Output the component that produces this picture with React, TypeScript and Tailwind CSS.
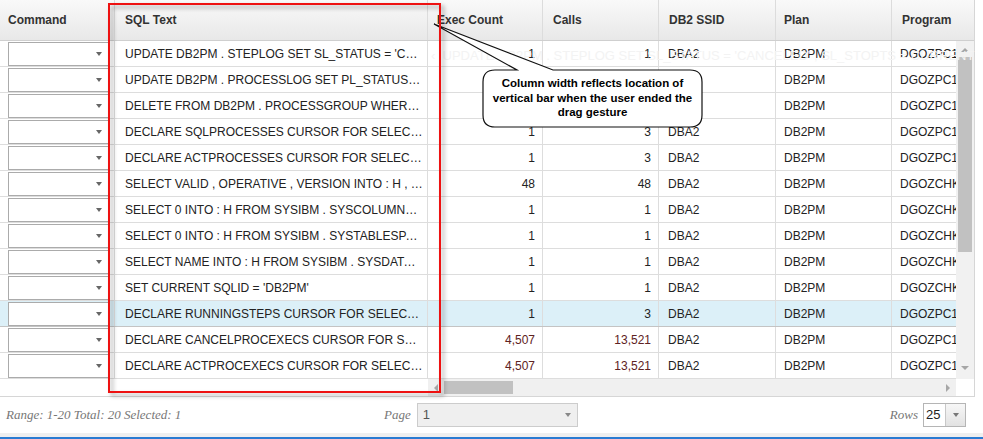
import React from "react";

type Row = {
  sql: string;
  exec: string;
  calls: string;
  ssid: string;
  plan: string;
  program: string;
  selected?: boolean;
  hot?: boolean;
};

const rows: Row[] = [
  { sql: "UPDATE DB2PM . STEPLOG SET SL_STATUS = 'CANCELED' , SL_STOPTS = CURRENT TIMESTAMP", exec: "1", calls: "1", ssid: "DBA2", plan: "DB2PM", program: "DGOZPC1" },
  { sql: "UPDATE DB2PM . PROCESSLOG SET PL_STATUS = 'CANCELED' WHERE PL_ID = : H", exec: "1", calls: "1", ssid: "DBA2", plan: "DB2PM", program: "DGOZPC1" },
  { sql: "DELETE FROM DB2PM . PROCESSGROUP WHERE PG_ID = : H", exec: "1", calls: "1", ssid: "DBA2", plan: "DB2PM", program: "DGOZPC1" },
  { sql: "DECLARE SQLPROCESSES CURSOR FOR SELECT PR_ID FROM DB2PM . PROCESS", exec: "1", calls: "3", ssid: "DBA2", plan: "DB2PM", program: "DGOZPC1" },
  { sql: "DECLARE ACTPROCESSES CURSOR FOR SELECT PR_ID FROM DB2PM . PROCESS", exec: "1", calls: "3", ssid: "DBA2", plan: "DB2PM", program: "DGOZPC1" },
  { sql: "SELECT VALID , OPERATIVE , VERSION INTO : H , : H , : H FROM SYSIBM . SYSPACKAGE", exec: "48", calls: "48", ssid: "DBA2", plan: "DB2PM", program: "DGOZCHK" },
  { sql: "SELECT 0 INTO : H FROM SYSIBM . SYSCOLUMNS WHERE TBCREATOR = : H", exec: "1", calls: "1", ssid: "DBA2", plan: "DB2PM", program: "DGOZCHK" },
  { sql: "SELECT 0 INTO : H FROM SYSIBM . SYSTABLESPACE WHERE DBNAME = : H", exec: "1", calls: "1", ssid: "DBA2", plan: "DB2PM", program: "DGOZCHK" },
  { sql: "SELECT NAME INTO : H FROM SYSIBM . SYSDATABASE WHERE NAME = : H", exec: "1", calls: "1", ssid: "DBA2", plan: "DB2PM", program: "DGOZCHK" },
  { sql: "SET CURRENT SQLID = 'DB2PM'", exec: "1", calls: "1", ssid: "DBA2", plan: "DB2PM", program: "DGOZCHK" },
  { sql: "DECLARE RUNNINGSTEPS CURSOR FOR SELECT SL_ID FROM DB2PM . STEPLOG", exec: "1", calls: "3", ssid: "DBA2", plan: "DB2PM", program: "DGOZPC1", selected: true },
  { sql: "DECLARE CANCELPROCEXECS CURSOR FOR SELECT PL_ID FROM DB2PM . PROCESSLOG", exec: "4,507", calls: "13,521", ssid: "DBA2", plan: "DB2PM", program: "DGOZPC1", hot: true },
  { sql: "DECLARE ACTPROCEXECS CURSOR FOR SELECT PL_ID FROM DB2PM . PROCESSLOG", exec: "4,507", calls: "13,521", ssid: "DBA2", plan: "DB2PM", program: "DGOZPC1", hot: true },
];

const Caret = ({ dir = "down" }: { dir?: "down" | "up" | "left" | "right" }) => {
  if (dir === "up")
    return <div className="w-0 h-0 border-x-[4px] border-x-transparent border-b-[4px] border-b-[#a6a6a6]" />;
  if (dir === "left")
    return <div className="w-0 h-0 border-y-[4px] border-y-transparent border-r-[4px] border-r-[#a6a6a6]" />;
  if (dir === "right")
    return <div className="w-0 h-0 border-y-[4px] border-y-transparent border-l-[4px] border-l-[#a6a6a6]" />;
  return <div className="w-0 h-0 border-x-[3px] border-x-transparent border-t-[4px] border-t-[#666]" />;
};

const rowCls = (r: Row) =>
  r.selected
    ? "bg-[#dcf0f8] border-b border-[#c4c4c4]"
    : "bg-white border-b border-[#dddddd]";

export default function App() {
  return (
    <div className="relative w-[983px] h-[439px] bg-white overflow-hidden font-['Liberation_Sans',Arial,sans-serif] text-[12px] text-[#222]">
      <div className="w-[975px] h-[397px] border-r border-b border-[#d6d6d6] flex flex-col">
        {/* header */}
        <div className="flex h-[41px] shrink-0 border-b border-[#cfcfcf] bg-gradient-to-b from-[#f9f9f9] to-[#e8e8e8] font-bold text-[#333]">
          <div className="w-[115px] border-r border-[#dcdcdc] pl-[8px] flex items-center">Command</div>
          <div className="w-[313px] border-r border-[#dcdcdc] pl-[10px] flex items-center">SQL Text</div>
          <div className="w-[115px] border-r border-[#dcdcdc] pl-[9px] flex items-center">Exec Count</div>
          <div className="w-[116px] border-r border-[#dcdcdc] pl-[10px] flex items-center">Calls</div>
          <div className="w-[117px] border-r border-[#dcdcdc] pl-[10px] flex items-center">DB2 SSID</div>
          <div className="w-[116px] border-r border-[#dcdcdc] pl-[8px] flex items-center">Plan</div>
          <div className="flex-1 pl-[10px] flex items-center">Program</div>
        </div>

        {/* body */}
        <div className="flex h-[355px]">
          {/* frozen columns */}
          <div className="w-[428px] flex flex-col">
            {rows.map((r, i) => (
              <div key={i} className={`flex h-[26px] ${rowCls(r)}`}>
                <div className="w-[115px] border-r border-[#dddddd] pl-[8px] pt-[1px]">
                  <div className="w-[102px] h-[24px] border border-[#ababab] bg-white flex items-center justify-end pr-[7px]">
                    <Caret />
                  </div>
                </div>
                <div className="w-[313px] border-r border-[#dddddd] pl-[10px] pr-[4px] flex items-center">
                  <span className="truncate">{r.sql}</span>
                </div>
              </div>
            ))}
          </div>

          {/* scrolling columns */}
          <div className="w-[528px] flex flex-col">
            <div className="h-[338px] overflow-hidden">
              {rows.map((r, i) => (
                <div key={i} className={`flex w-[580px] h-[26px] ${rowCls(r)}`}>
                  <div className={`w-[115px] shrink-0 border-r border-[#dddddd] pr-[7px] flex items-center justify-end ${r.hot ? "text-[#5e2222]" : ""}`}>
                    {r.exec}
                  </div>
                  <div className={`w-[116px] shrink-0 border-r border-[#dddddd] pr-[7px] flex items-center justify-end ${r.hot ? "text-[#5e2222]" : ""}`}>
                    {r.calls}
                  </div>
                  <div className="w-[117px] shrink-0 border-r border-[#dddddd] pl-[9px] flex items-center">{r.ssid}</div>
                  <div className="w-[116px] shrink-0 border-r border-[#dddddd] pl-[8px] flex items-center">{r.plan}</div>
                  <div className="w-[116px] shrink-0 pl-[8px] flex items-center">{r.program}</div>
                </div>
              ))}
            </div>
            {/* horizontal scrollbar */}
            <div className="h-[17px] bg-[#f0f0f0] flex items-center pl-[6px] pr-[6px]">
              <Caret dir="left" />
              <div className="ml-[6px] w-[69px] h-[13px] bg-[#c1c1c1]" />
              <div className="flex-1" />
              <Caret dir="right" />
            </div>
          </div>

          {/* vertical scrollbar */}
          <div className="w-[18px] flex flex-col">
            <div className="h-[338px] bg-[#f1f1f1] flex flex-col items-center pt-[7px] pb-[9px]">
              <Caret dir="up" />
              <div className="mt-[5px] w-[14px] h-[195px] bg-[#c1c1c1]" />
              <div className="flex-1" />
              <div className="w-0 h-0 border-x-[4px] border-x-transparent border-t-[4px] border-t-[#a6a6a6]" />
            </div>
            <div className="flex-1 bg-white" />
          </div>
        </div>
      </div>

      {/* footer */}
      <div className="h-[36px] w-[980px] flex items-center font-['Liberation_Serif',Georgia,serif] italic text-[13px] text-[#777]">
        <div className="w-[384px] pl-[6px]">Range: 1-20 Total: 20 Selected: 1</div>
        <span>Page</span>
        <div className="ml-[6px] w-[161px] h-[24px] border border-[#cccccc] bg-[#efefef] flex items-center justify-between pl-[5px] pr-[6px] not-italic font-['Liberation_Sans',Arial,sans-serif] text-[#555]">
          <span>1</span>
          <div className="w-0 h-0 border-x-[3px] border-x-transparent border-t-[4px] border-t-[#888]" />
        </div>
        <div className="flex-1" />
        <span>Rows</span>
        <div className="ml-[5px] mr-[14px] w-[43px] h-[24px] border border-[#b5b5b5] flex not-italic font-['Liberation_Sans',Arial,sans-serif] text-[#222] text-[13px]">
          <div className="w-[21px] bg-white flex items-center pl-[2px]">25</div>
          <div className="flex-1 border-l border-[#c8c8c8] bg-gradient-to-b from-[#f7f7f7] to-[#e2e2e2] flex items-center justify-center">
            <div className="w-0 h-0 border-x-[3px] border-x-transparent border-t-[4px] border-t-[#777]" />
          </div>
        </div>
      </div>
      <div className="h-[4px] bg-[#efefef]" />
      <div className="h-[2px] bg-[#2a7bd2]" />

      {/* faint drag ghost of the cell text */}
      <div className="absolute left-[431px] top-[46px] text-[13px] text-[#f3f3f3] whitespace-nowrap pointer-events-none">
        ‹ &nbsp;UPDATE DB2PM . STEPLOG SET SL_STATUS = 'CANCELED' , SL_STOPTS = CURRENT
      </div>

      {/* callout */}
      <svg className="absolute left-0 top-0 pointer-events-none" width="983" height="439">
        <path
          d="M495 70 L517 70 L434 24 L553 70 L690 70 Q702 70 702 82 L702 115 Q702 127 690 127 L495 127 Q483 127 483 115 L483 82 Q483 70 495 70 Z"
          fill="white"
          stroke="#111"
          strokeWidth="1.2"
        />
      </svg>
      <div className="absolute left-[483px] top-[76px] w-[219px] text-center font-bold text-[11.5px] leading-[14.5px] text-black">
        Column width reflects location of
        <br />
        vertical bar when the user ended the
        <br />
        drag gesture
      </div>

      {/* annotation rectangle */}
      <div className="absolute left-[108px] top-[3px] w-[333px] h-[390px] border-2 border-[#ee1111] [filter:drop-shadow(3px_3px_2px_rgba(0,0,0,0.35))] pointer-events-none" />
    </div>
  );
}
